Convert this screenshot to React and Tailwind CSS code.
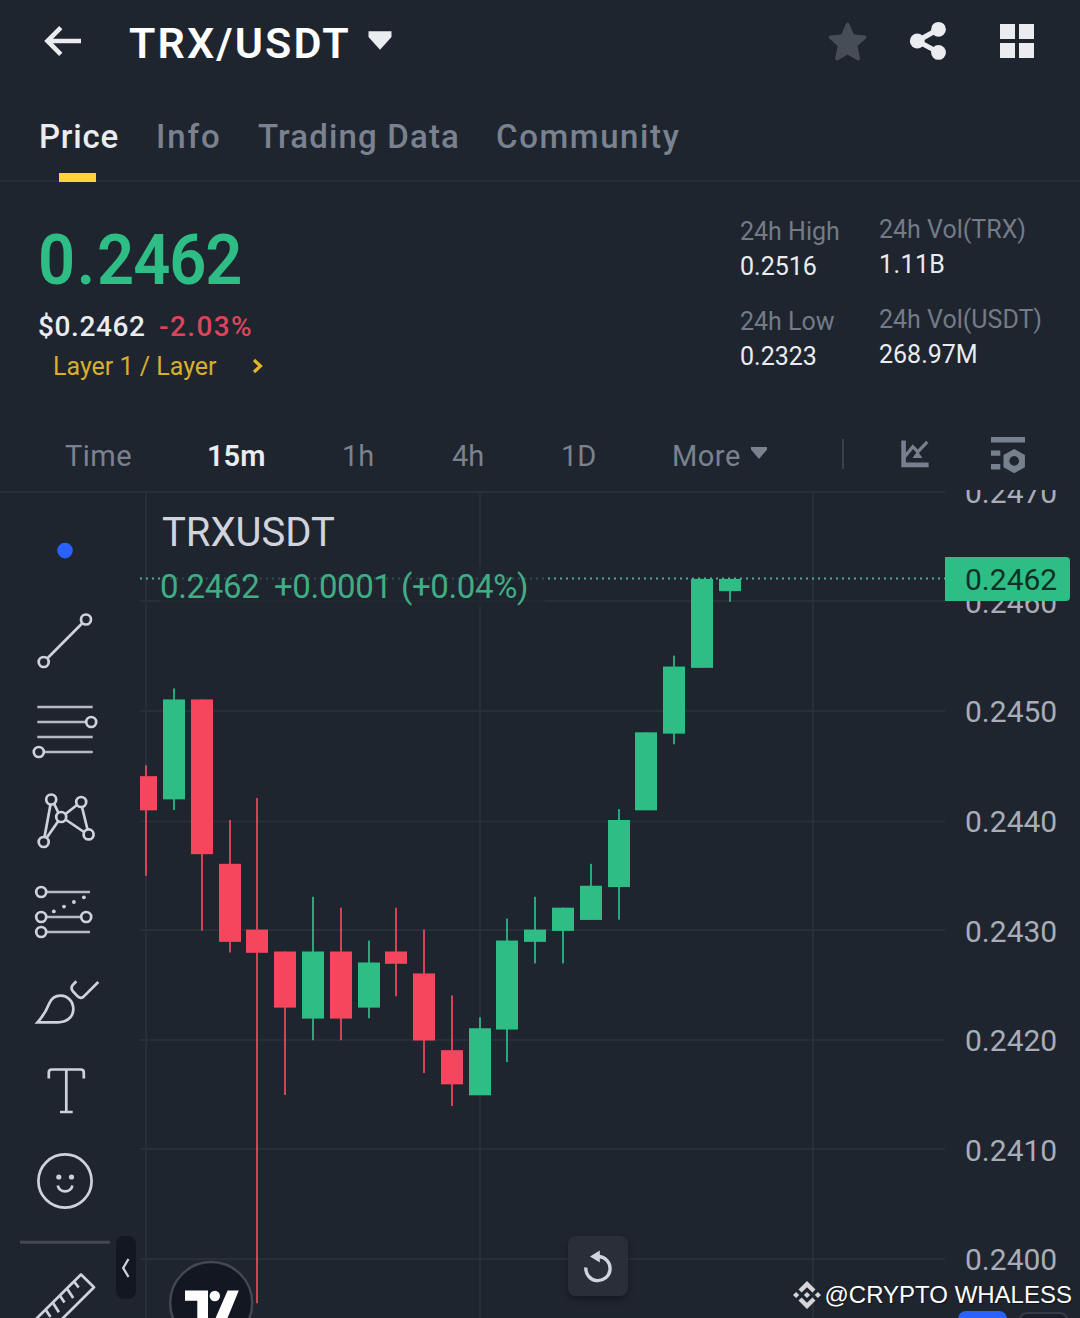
const TABS = [
  { label: 'Price', cls: 'w-[116px] tracking-[0.8px] text-[#eaecef]', active: true },
  { label: 'Info', cls: 'w-[103px] pl-px tracking-[1.9px] text-[#7a8290]' },
  { label: 'Trading Data', cls: 'w-[238px] tracking-[1.15px] text-[#7a8290]' },
  { label: 'Community', cls: 'tracking-[1.6px] text-[#7a8290]' },
]

const INTERVALS = [
  { label: 'Time', cls: 'w-[142px] tracking-[0.5px] text-[#7a8290]' },
  { label: '15m', cls: 'w-[135px] font-semibold text-[#eaecef]' },
  { label: '1h', cls: 'w-[110px] text-[#7a8290]' },
  { label: '4h', cls: 'w-[109px] text-[#7a8290]' },
  { label: '1D', cls: 'w-[111px] text-[#7a8290]' },
]

const TICKS = ['0.2470', '0.2460', '0.2450', '0.2440', '0.2430', '0.2420', '0.2410', '0.2400']

// x, open, high, low, close (prices in 1/10000 USDT)
const CANDLES = [
  [146, 2444, 2445, 2435, 2441],
  [174, 2442, 2452, 2441, 2451],
  [202, 2451, 2451, 2430, 2437],
  [230, 2436, 2440, 2428, 2429],
  [257, 2430, 2442, 2396, 2428],
  [285, 2428, 2428, 2415, 2423],
  [313, 2422, 2433, 2420, 2428],
  [341, 2428, 2432, 2420, 2422],
  [369, 2423, 2429, 2422, 2427],
  [396, 2428, 2432, 2424, 2427],
  [424, 2426, 2430, 2417, 2420],
  [452, 2419, 2424, 2414, 2416],
  [480, 2415, 2422, 2415, 2421],
  [507, 2421, 2431, 2418, 2429],
  [535, 2429, 2433, 2427, 2430],
  [563, 2430, 2432, 2427, 2432],
  [591, 2431, 2436, 2431, 2434],
  [619, 2434, 2441, 2431, 2440],
  [646, 2441, 2448, 2441, 2448],
  [674, 2448, 2455, 2447, 2454],
  [702, 2454, 2462, 2454, 2462],
  [730, 2461, 2462, 2460, 2462],
]

const priceY = p => 600.8 + (2460 - p) * 10.96

function Header() {
  return (
    <header className="flex h-[82px] items-center pl-[43px] pr-[44px]">
      <svg width="40" height="32" viewBox="43 25.5 40 32" fill="none" stroke="#eaecef" strokeWidth="4.6">
        <path d="M81 41.5H47.5M60.8 28.2 47.5 41.5 60.8 54.8" />
      </svg>
      <h1 className="mt-[3px] ml-[46px] text-[43px] leading-[50px] font-semibold tracking-[2.1px] whitespace-nowrap text-white">TRX/USDT</h1>
      <svg className="ml-[17px]" width="24" height="20" viewBox="368 31 24 20">
        <path d="M368.5 31.3h23V37L380 49.7 368.5 37z" fill="#eaecef" />
      </svg>
      <div className="ml-auto flex items-center">
        <svg width="40" height="42" viewBox="828 20 40 42">
          <path d="M847.6 24.5 852.6 36 864.6 37.2 855.6 45.4 858.2 58.7 847.6 52.4 837 58.7 839.6 45.4 830.6 37.2 842.6 36z" fill="#474d57" stroke="#474d57" strokeWidth="3.6" strokeLinejoin="round" />
        </svg>
        <svg className="ml-[40px]" width="40" height="42" viewBox="908 20 40 42" fill="#eaecef">
          <path d="M938.5 29.3 917.3 41l21.2 11.4" fill="none" stroke="#eaecef" strokeWidth="5" />
          <circle cx="917.3" cy="41" r="7.4" />
          <circle cx="938.5" cy="29.3" r="7.4" />
          <circle cx="938.5" cy="52.4" r="7.4" />
        </svg>
        <svg className="ml-[50px]" width="38" height="36" viewBox="998 22.5 38 36" fill="#eaecef">
          <path d="M1000 23.5h15v15h-15zM1019 23.5h15v15h-15zM1000 42.5h15v15h-15zM1019 42.5h15v15h-15z" />
        </svg>
      </div>
    </header>
  )
}

function Tabs() {
  return (
    <nav className="flex h-[100px] border-b-2 border-[#272d37] pt-[35px] pl-[39px]">
      {TABS.map(t => (
        <div key={t.label} className={`relative h-[63px] shrink-0 text-[33px] leading-[40px] font-medium whitespace-nowrap ${t.cls}`}>
          {t.label}
          {t.active && <span className="absolute -bottom-[2px] left-[20px] h-[9px] w-[37px] bg-[#fcd535]" />}
        </div>
      ))}
    </nav>
  )
}

function Stat({ label, value, valueCls = '' }) {
  return (
    <div className="h-[90px] text-[25px] leading-[35px] whitespace-nowrap">
      <p className="text-[#747b87]">{label}</p>
      <p className={`text-[#eaecef] ${valueCls}`}>{value}</p>
    </div>
  )
}

function Summary() {
  return (
    <section className="flex h-[238px]">
      <div className="w-[740px] pt-[43px] pl-[38px]">
        <p className="origin-left scale-x-[0.93] text-[70px] leading-[70px] font-semibold tracking-[-1.2px] text-[#2ebd85]">
          0<span className="px-[3px]">.</span>2462
        </p>
        <p className="mt-[15px] flex text-[28px] leading-[34px] font-medium">
          <span className="w-[121px] tracking-[0.6px] text-[#eaecef]">$0.2462</span>
          <span className="tracking-[1.4px] text-[#d9465c]">-2.03%</span>
        </p>
        <p className="mt-[8px] flex items-center pl-[15px] text-[25px] leading-[30px] text-[#d9ae2b]">
          <span className="w-[199px]">Layer 1 / Layer</span>
          <svg className="-mt-[2px]" width="12" height="16" viewBox="0 0 12 16" fill="none" stroke="#e3b52a" strokeWidth="3.2">
            <path d="M2 2l6.5 6L2 14" />
          </svg>
        </p>
      </div>
      <div className="w-[139px] pt-[32px]">
        <Stat label="24h High" value="0.2516" />
        <Stat label="24h Low" value="0.2323" />
      </div>
      <div className="pt-[30px]">
        <Stat label="24h Vol(TRX)" value="1.11B" valueCls="tracking-[0.4px]" />
        <Stat label="24h Vol(USDT)" value="268.97M" />
      </div>
    </section>
  )
}

function IntervalBar() {
  return (
    <div className="flex h-[70px] items-center pt-px pl-[65px] text-[29px] leading-[36px]">
      {INTERVALS.map(i => (
        <span key={i.label} className={`shrink-0 ${i.cls}`}>{i.label}</span>
      ))}
      <span className="w-[79px] tracking-[0.5px] text-[#7a8290]">More</span>
      <svg className="-mt-[5px]" width="16" height="12" viewBox="0 0 16 12">
        <path d="M0 0h16v2.5L8 12 0 2.5z" fill="#7a8290" />
      </svg>
      <span className="-mt-[4px] ml-[75px] h-[30px] w-[2px] bg-[#3a414d]" />
      <svg className="ml-[55px] -mt-[4px]" width="32" height="30" viewBox="899 438.5 32 30" fill="none" stroke="#76808f">
        <path d="M903.6 440v24.4h25" strokeWidth="4.6" />
        <path d="M904.5 456.5l8.3-10.3 5 5.2 9.5-10" strokeWidth="3.2" />
        <path d="M917.5 450.5l5 7h-10z" fill="#76808f" stroke="none" />
      </svg>
      <svg className="-mt-[2px] ml-[58px]" width="38" height="40" viewBox="989 434.5 38 40" fill="#76808f">
        <path d="M991 436.5h34v5.6h-34zM991 450h9.3v5.3h-9.3zM991 463.5h9.3v5.6h-9.3z" />
        <path fillRule="evenodd" d="M1014.2 448.4l10.7 6v12.3l-10.7 6-10.7-6v-12.3zM1014.2 455.6a4.8 4.8 0 1 0 .01 0z" />
      </svg>
    </div>
  )
}

function ToolRow({ y, h, children }) {
  return (
    <svg className="block shrink-0" width="140" height={h} viewBox={`0 ${y} 140 ${h}`} fill="none" stroke="#cfd2da" strokeWidth="2.7">
      {children}
    </svg>
  )
}

function Toolbar() {
  return (
    <div className="relative flex w-[140px] shrink-0 flex-col">
      <ToolRow y={490} h={105}>
        <circle cx="65" cy="550.6" r="7.8" fill="#2962ff" stroke="none" />
      </ToolRow>
      {/* trend line */}
      <ToolRow y={595} h={90}>
        <path d="M82 623.5 47.7 658" />
        <circle cx="86" cy="619.5" r="5" />
        <circle cx="43.7" cy="662" r="5" />
      </ToolRow>
      {/* fib retracement */}
      <ToolRow y={685} h={90}>
        <path d="M37.3 707h55.4M37.3 722h48.5M37.3 737h55.4M44 752h48.7" stroke="#b5b9c3" />
        <circle cx="91.2" cy="722" r="5" />
        <circle cx="38.8" cy="752" r="5" />
      </ToolRow>
      {/* xabcd pattern */}
      <ToolRow y={775} h={95}>
        <path d="M50.5 804.5 44.5 837M54 803.5l4.500 9.500M65.500 814l11.500-9M82 807l5.500 22.500M65.500 819.500l18.500 12.500M58 821.500 46.500 838" />
        <circle cx="51.2" cy="799.5" r="5" />
        <circle cx="81.2" cy="802" r="5" />
        <circle cx="61.2" cy="817" r="5" />
        <circle cx="88.6" cy="834.4" r="5" />
        <circle cx="43.7" cy="842" r="5" />
      </ToolRow>
      {/* forecast */}
      <ToolRow y={870} h={90}>
        <path d="M46.5 892H90M46.5 917h34M46.5 932H90" stroke="#b5b9c3" />
        <circle cx="41.2" cy="892" r="5" />
        <circle cx="41.2" cy="917" r="5" />
        <circle cx="86.2" cy="917" r="5" />
        <circle cx="41.2" cy="932" r="5" />
        <g fill="#cfd2da" stroke="none">
          <circle cx="53.8" cy="911.4" r="1.9" />
          <circle cx="64" cy="906.6" r="1.9" />
          <circle cx="73.9" cy="902" r="1.9" />
          <circle cx="83.9" cy="897.3" r="1.9" />
        </g>
      </ToolRow>
      {/* brush */}
      <ToolRow y={960} h={90}>
        <path d="M37.5 1022.3H58C68 1022.3 73.3 1016 73.3 1009c0-7.5-5.5-13.4-12.8-13.4-5.5 0-9.3 3-11.3 8-2.4 6.4-6.2 12.600-11.700 18.700z" />
        <path d="M76.3 981.3l-3.8 3.9q-2 3.6.6 6.3l4.8 5.100q2.800 2.400 5.700 0L98.300 982" />
      </ToolRow>
      {/* text */}
      <ToolRow y={1050} h={90}>
        <path d="M48.8 1078.5v-6q0-3 3-3h29q3 0 3 3v6M66.3 1069.5v42.5M60 1112h12.7" />
      </ToolRow>
      {/* emoji */}
      <ToolRow y={1140} h={85}>
        <circle cx="65" cy="1181" r="26.6" />
        <circle cx="58.8" cy="1177" r="2.6" fill="#cfd2da" stroke="none" />
        <circle cx="71.5" cy="1177" r="2.6" fill="#cfd2da" stroke="none" />
        <path d="M57.8 1185.5a7.4 7 0 0 0 14.6 0" />
      </ToolRow>
      {/* divider + ruler */}
      <ToolRow y={1225} h={93}>
        <path d="M20 1242.3h90" stroke="#434852" strokeWidth="3" />
        <path d="M30 1325 81 1274.5 94 1287.3 56 1325" strokeLinejoin="round" />
        <path d="M74 1281.5l4.7 6M67 1288.5l6.2 9.5M59.8 1295.5l4.7 7M52.7 1302.5l6.2 9.8M45.5 1309.5l5 7.5" />
      </ToolRow>
      <div className="absolute top-[746px] left-[116px] flex h-[63px] w-[20px] items-center justify-center rounded-lg bg-[#131722]">
        <svg width="10" height="22" viewBox="0 0 10 22" fill="none" stroke="#cfd2da" strokeWidth="2.3">
          <path d="M7.5 2 2.2 11l5.3 9" />
        </svg>
      </div>
    </div>
  )
}

function Chart() {
  return (
    <div className="relative w-[805px] shrink-0">
      <svg className="block" width="805" height="828" viewBox="140 490 805 828">
        <g fill="#292f39">
          {[145, 479, 812].map(x => <rect key={x} x={x} y="491" width="2" height="827" />)}
          {[600, 710, 820.5, 929, 1039, 1148, 1258].map(y => <rect key={y} x="140" y={y} width="805" height="2" />)}
        </g>
        {CANDLES.map(([x, open, high, low, close]) => {
          const top = priceY(Math.max(open, close))
          const bottom = priceY(Math.min(open, close)) + 1.3
          return (
            <g key={x} fill={close > open ? '#2ebd85' : '#f6465d'}>
              <rect x={x - 1} y={priceY(high)} width="2" height={priceY(low) - priceY(high) + 1} opacity="0.85" />
              <rect x={x - 11} y={top} width="22" height={bottom - top} />
            </g>
          )
        })}
        <path d="M140 578.5H945" stroke="#4fae8c" strokeWidth="2" strokeDasharray="2 4" />
        <circle cx="211.2" cy="1303" r="41" fill="#131722" stroke="#434852" strokeWidth="2.4" />
        <g fill="#fff">
          <path d="M185 1290.600h23V1320h-10.700v-19.300H185zM227.600 1290.600h11.200L226.700 1320h-12z" />
          <circle cx="214.8" cy="1296" r="5.2" />
        </g>
      </svg>
      <div className="absolute top-[19px] left-[20px] whitespace-nowrap">
        <p className="pl-[2px] text-[40px] leading-[48px] text-[#d1d4dc]">TRXUSDT</p>
        <p className="mt-[9px] flex w-[385px] bg-[#1f252f]/70 text-[33px] leading-[41px] tracking-[-0.35px] text-[#3fae84]">
          <span className="w-[114px]">0.2462</span>
          <span className="w-[127px]">+0.0001</span>
          <span>(+0.04%)</span>
        </p>
      </div>
      <button className="absolute top-[746px] left-[428px] flex size-[60px] items-center justify-center rounded-lg bg-[#2a2e39] shadow-[0_3px_7px_rgba(0,0,0,0.35)]">
        <svg width="30" height="34" viewBox="583 1250 30 34" fill="none">
          <path d="M599 1257.500A12.100 12.100 0 1 1 585.900 1268.500" stroke="#d1d4dc" strokeWidth="3.400" />
          <path d="M590 1257.500l9.800-6v12z" fill="#d1d4dc" />
        </svg>
      </button>
    </div>
  )
}

function PriceAxis() {
  return (
    <div className="relative h-[828px] w-[135px] shrink-0 overflow-hidden">
      <div className="-mt-[52px] flex flex-col pl-[20px] text-[30px] text-[#a9adb7]">
        {TICKS.map(t => (
          <span key={t} className="flex h-[109.6px] shrink-0 items-center">{t}</span>
        ))}
      </div>
      <div className="absolute top-[67px] left-0 flex h-[44px] w-[125px] items-center rounded-r-[4px] bg-[#2ebd85] pl-[20px] text-[30px] text-[#0e3126]">
        0.2462
      </div>
      <span className="absolute top-[821px] left-[13px] h-[30px] w-[49px] rounded-[8px] bg-[#2962ff]" />
      <span className="absolute top-[822px] left-[74px] h-[30px] w-[49px] rounded-[8px] border-2 border-[#343a46] bg-[#191e28]" />
    </div>
  )
}

function Watermark() {
  return (
    <div className="absolute right-[8px] bottom-[7px] flex items-center font-['Liberation_Sans',sans-serif] text-[24px] leading-[32px] whitespace-nowrap text-white [text-shadow:1px_1px_1px_rgba(0,0,0,0.5)]">
      <svg className="mr-[3px]" width="28" height="28" viewBox="0 0 28 28" fill="#d5d6d9">
        <path d="M14 0l8.500 8.500-3.100 3.100L14 6.200l-5.400 5.400-3.100-3.100zM14 28l8.500-8.500-3.100-3.100L14 21.800l-5.400-5.400-3.100 3.100zM3.100 10.900 6.200 14l-3.100 3.100L0 14zM24.900 10.900 28 14l-3.100 3.100-3.100-3.100zM14 10.900l3.100 3.100-3.100 3.100-3.100-3.100z" />
      </svg>
      <span>@CRYPTO WHALESS</span>
    </div>
  )
}

export default function App() {
  return (
    <div className="relative flex h-[1318px] w-[1080px] flex-col overflow-hidden bg-[#1f252f] font-[Roboto,sans-serif]">
      <Header />
      <Tabs />
      <Summary />
      <IntervalBar />
      <main className="relative flex h-[828px] shrink-0">
        <span className="absolute top-px left-0 h-[2px] w-[945px] bg-[#292f39]" />
        <Toolbar />
        <Chart />
        <PriceAxis />
      </main>
      <Watermark />
    </div>
  )
}
